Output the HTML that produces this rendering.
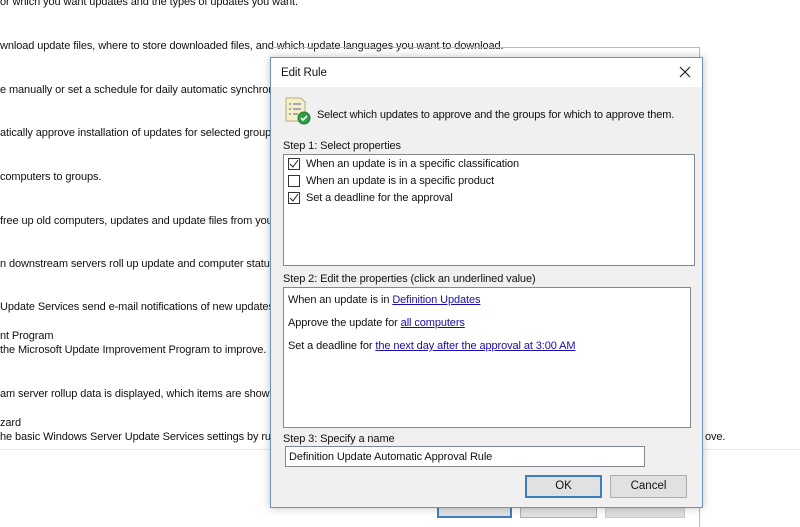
<!DOCTYPE html>
<html><head><style>
*{margin:0;padding:0;box-sizing:border-box}
body{width:800px;height:518px;overflow:hidden;background:#fff;font-family:"Liberation Sans",sans-serif;font-size:11px;color:#111;position:relative}
.t{position:absolute;left:0;white-space:nowrap;line-height:14px;letter-spacing:-0.1px}
.dlg{position:absolute;left:270px;top:57px;width:433px;height:451px;background:#f0f0f0;border:1px solid #6a94c4;box-shadow:0 0 8px rgba(0,0,0,.25)}
.title{position:absolute;left:0;top:0;width:100%;height:29px;background:#fff}
.a{position:absolute;white-space:nowrap;line-height:14px;letter-spacing:-0.1px}
.box{position:absolute;background:#fff;border:1px solid #828790}
.cb{position:absolute;width:12px;height:12px;border:1px solid #333;background:#fff}
a{color:#1a0dab;text-decoration:underline}
.btn{position:absolute;height:23px;background:#e1e1e1;border:1px solid #adadad;text-align:center;line-height:21px;font-size:11.5px}
</style></head><body>
<div class="t" style="top:-5px">or which you want updates and the types of updates you want.</div>
<div class="t" style="top:39px">wnload update files, where to store downloaded files, and which update languages you want to download.</div>
<div class="t" style="top:83px">e manually or set a schedule for daily automatic synchronization.</div>
<div class="t" style="top:126px">atically approve installation of updates for selected groups.</div>
<div class="t" style="top:170px">computers to groups.</div>
<div class="t" style="top:214px">free up old computers, updates and update files from your server.</div>
<div class="t" style="top:257px">n downstream servers roll up update and computer status.</div>
<div class="t" style="top:300px">Update Services send e-mail notifications of new updates.</div>
<div class="t" style="top:329px">nt Program</div>
<div class="t" style="top:343px">the Microsoft Update Improvement Program to improve.</div>
<div class="t" style="top:387px">am server rollup data is displayed, which items are shown.</div>
<div class="t" style="top:416px">zard</div>
<div class="t" style="top:430px">he basic Windows Server Update Services settings by running the wizard above.</div>
<div class="t" style="top:430px;left:705px">ove.</div>
<div style="position:absolute;left:0;top:449px;width:800px;height:1px;background:#e8e8e8"></div>
<div style="position:absolute;left:270px;top:47px;width:430px;height:480px;border-top:1px solid #bbb;border-right:1px solid #bbb;background:transparent"></div>
<div style="position:absolute;left:437px;top:500px;width:75px;height:18px;border:2px solid #3c7fc1;background:#e1e1e1"></div>
<div style="position:absolute;left:520px;top:500px;width:77px;height:18px;border:1px solid #adadad;background:#e1e1e1"></div>
<div style="position:absolute;left:605px;top:500px;width:80px;height:18px;border:1px solid #ccc;background:#ddd"></div>
<div class="dlg">
<div class="title"></div>
<div class="a" style="left:10px;top:8px;font-size:11.5px">Edit Rule</div>
<svg style="position:absolute;left:408px;top:8px" width="12" height="12"><path d="M1 1L11 11M11 1L1 11" stroke="#222" stroke-width="1.2"/></svg>
<svg style="position:absolute;left:12px;top:37px" width="28" height="30"><path d="M3 3h15l4 4v19H3z" fill="#f6efc9" stroke="#b9ad7d"/><g stroke="#6a7fa5" stroke-width="1.3"><path d="M6 9h2M10 9h8M6 14h2M10 14h8M6 19h2M10 19h5"/></g><circle cx="21" cy="23" r="6" fill="#2ea043" stroke="#1e7a30"/><path d="M18 23l2 2 4-4" stroke="#fff" stroke-width="1.6" fill="none"/></svg>
<div class="a" style="left:46px;top:50px;font-size:11px;letter-spacing:-0.15px">Select which updates to approve and the groups for which to approve them.</div>
<div class="a" style="left:12px;top:81px">Step 1: Select properties</div>
<div class="box" style="left:12px;top:96px;width:412px;height:112px">
<div class="cb" style="left:4px;top:3px"></div><svg style="position:absolute;left:5px;top:4px" width="10" height="10"><path d="M1 5l3 3 5-7" stroke="#222" fill="none"/></svg>
<div class="a" style="left:22px;top:2px">When an update is in a specific classification</div>
<div class="cb" style="left:4px;top:20px"></div>
<div class="a" style="left:22px;top:19px">When an update is in a specific product</div>
<div class="cb" style="left:4px;top:37px"></div><svg style="position:absolute;left:5px;top:38px" width="10" height="10"><path d="M1 5l3 3 5-7" stroke="#222" fill="none"/></svg>
<div class="a" style="left:22px;top:36px">Set a deadline for the approval</div>
</div>
<div class="a" style="left:12px;top:214px">Step 2: Edit the properties (click an underlined value)</div>
<div class="box" style="left:12px;top:229px;width:408px;height:141px">
<div class="a" style="left:4px;top:5px">When an update is in <a>Definition Updates</a></div>
<div class="a" style="left:4px;top:28px">Approve the update for <a>all computers</a></div>
<div class="a" style="left:4px;top:51px">Set a deadline for <a>the next day after the approval at 3:00 AM</a></div>
</div>
<div class="a" style="left:12px;top:374px">Step 3: Specify a name</div>
<div class="box" style="left:14px;top:388px;width:360px;height:21px"><div class="a" style="left:3px;top:3px">Definition Update Automatic Approval Rule</div></div>
<div class="btn" style="left:254px;top:417px;width:77px;border:2px solid #3c7fc1;line-height:19px">OK</div>
<div class="btn" style="left:339px;top:417px;width:77px">Cancel</div>
</div>
</body></html>
